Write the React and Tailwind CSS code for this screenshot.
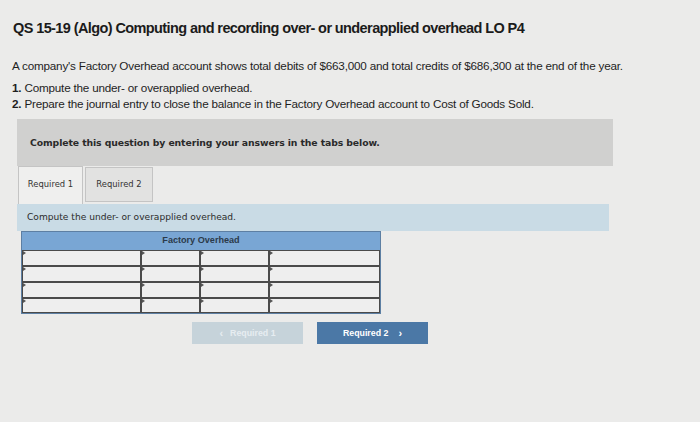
import React from "react";

const rows = [0, 1, 2, 3];

function Cell({ className }) {
  return (
    <div className={`relative h-full border-[1.5px] border-[#4a4a4a] bg-[#eeeeee] ${className}`}>
      <span className="absolute left-0 top-0 h-0 w-0 border-y-[2px] border-l-[3px] border-y-transparent border-l-[#555]" />
    </div>
  );
}

export default function App() {
  return (
    <div className="h-[422px] w-[700px] overflow-hidden bg-[#ebebea] font-['Liberation_Sans',Arial,sans-serif] text-[#1e1e1e]">
      <h1 className="pl-[13px] pt-[18px] text-[14.5px] font-bold tracking-[-0.6px] text-[#1b1b1b]">
        QS 15-19 (Algo) Computing and recording over- or underapplied overhead LO P4
      </h1>
      <p className="mt-[17px] pl-[12px] text-[11.7px] tracking-[-0.2px]">
        A company's Factory Overhead account shows total debits of $663,000 and total credits of $686,300 at the end of the year.
      </p>
      <ol className="mt-[6px] pl-[12px] text-[11.7px] leading-[16px] tracking-[-0.2px]">
        <li><b>1.</b> Compute the under- or overapplied overhead.</li>
        <li><b>2.</b> Prepare the journal entry to close the balance in the Factory Overhead account to Cost of Goods Sold.</li>
      </ol>

      <div className="ml-[17px] mt-[7px] w-[596px]">
        <div className="flex h-[47px] items-center bg-[#d0d0cf] pl-[13px] font-['DejaVu_Sans',Verdana,sans-serif] text-[9.3px] font-bold tracking-[-0.1px] text-[#2a2a2a]">
          Complete this question by entering your answers in the tabs below.
        </div>

        <div className="flex items-start gap-[2px] pl-[1px] font-['DejaVu_Sans',Verdana,sans-serif] text-[8.4px] text-[#333]">
          <div className="flex h-[38px] w-[65px] items-center justify-center border border-b-0 border-[#c4c4c4] bg-[#efefee] pb-[2px]">
            Required 1
          </div>
          <div className="mt-[1px] flex h-[35px] w-[68px] items-center justify-center border border-[#c4c4c4] bg-[#e2e2e1]">
            Required 2
          </div>
        </div>

        <div className="flex h-[27px] w-[592px] items-center bg-[#c9dbe5] pl-[10px] font-['DejaVu_Sans',Verdana,sans-serif] text-[9.1px] text-[#2c2c2c]">
          Compute the under- or overapplied overhead.
        </div>

        <div className="ml-[4px] w-[360px] border border-[#5d7fa3]">
          <div className="flex h-[18px] items-center justify-center bg-[#79a6d4] text-[9.1px] font-bold text-[#2b3a4a]">
            Factory Overhead
          </div>
          {rows.map((r) => (
            <div key={r} className="grid h-[15.75px] grid-cols-[119px_59px_69px_1fr]">
              <Cell />
              <Cell />
              <Cell />
              <Cell />
            </div>
          ))}
        </div>

        <div className="ml-[175px] mt-[8px] flex gap-[14px] text-[8.8px] font-bold">
          <div className="flex h-[22px] w-[111px] items-center justify-center gap-[7px] bg-[#c6d3da] text-[#e6edf1]">
            <span className="text-[11px] leading-none">‹</span>
            <span>Required 1</span>
          </div>
          <div className="flex h-[22px] w-[111px] items-center justify-center gap-[10px] bg-[#4b78a6] text-white">
            <span>Required 2</span>
            <span className="text-[11px] leading-none">›</span>
          </div>
        </div>
      </div>
    </div>
  );
}
